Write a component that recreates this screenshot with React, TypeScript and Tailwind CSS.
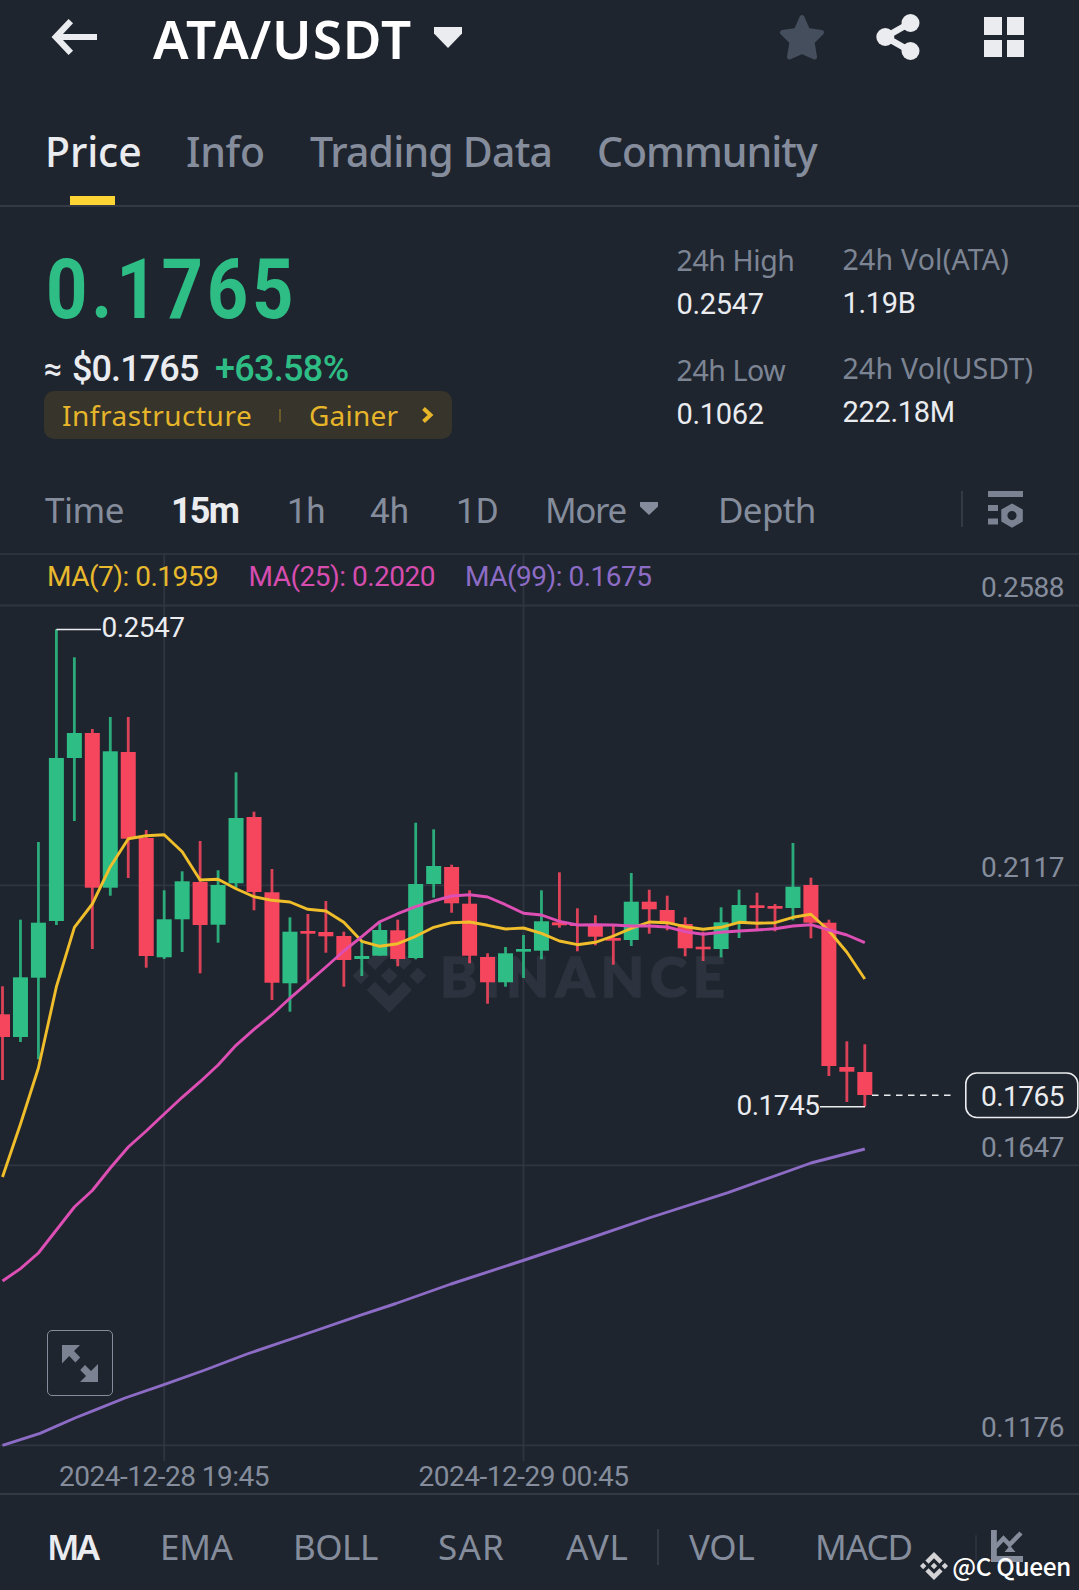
import React from "react";

const NOTO = "font-['Noto_Sans',sans-serif]";
const ROBOTO = "font-['Roboto',sans-serif]";

type Candle = [up: 0 | 1, high: number, top: number, bottom: number, low: number];

const CANDLES: Candle[] = [
  [0, 986.3, 1014.3, 1037, 1080],
  [1, 919.7, 977.3, 1037, 1042],
  [1, 842, 922.7, 977.7, 1059.3],
  [1, 629.3, 758, 921, 925],
  [1, 657.3, 733, 758, 821],
  [0, 729, 733, 887.7, 949],
  [1, 717, 751.3, 887.7, 895.7],
  [0, 717, 752, 838.7, 878],
  [0, 830, 838, 956, 967.7],
  [1, 890.3, 919.3, 957.3, 959],
  [1, 871.3, 881.3, 919.3, 952],
  [0, 841, 882, 925, 973.3],
  [1, 870.3, 885, 924.7, 942.7],
  [1, 772.3, 818, 883.3, 888.7],
  [0, 811.7, 817, 892, 910.3],
  [0, 869, 892.3, 982.7, 1000],
  [1, 917.3, 931.7, 983.3, 1011.7],
  [0, 914, 931, 933.7, 981.7],
  [0, 901, 932, 936.3, 952.7],
  [0, 931.7, 936, 960, 986.7],
  [1, 940, 956, 959, 976],
  [1, 922.7, 930, 955.7, 955.7],
  [0, 919.7, 930.3, 959, 966.3],
  [1, 822.7, 884, 958, 959.3],
  [1, 829.3, 866, 884, 897.7],
  [0, 864.7, 867, 903.3, 912.7],
  [0, 890.3, 903.7, 955.7, 963.3],
  [0, 953.3, 957, 982.3, 1003.7],
  [1, 947, 953.3, 982.3, 986.7],
  [1, 935, 949, 951.7, 978],
  [1, 890.3, 921.3, 950.7, 959.3],
  [0, 872.3, 922.3, 925.3, 927.7],
  [0, 908.3, 924, 926, 951.3],
  [0, 915.3, 924.3, 936.7, 945.3],
  [0, 924.3, 938, 940.7, 964.7],
  [1, 873, 901.7, 940, 946],
  [0, 889.7, 901.7, 909.3, 933.7],
  [0, 895.7, 910, 924, 930.3],
  [0, 917.3, 924, 948.3, 956.3],
  [0, 931.7, 946.7, 949.3, 961],
  [1, 907.3, 922.3, 949, 957.3],
  [1, 889.7, 905, 923, 938],
  [0, 892.7, 905.3, 908, 929],
  [0, 904, 906, 908.7, 931.3],
  [1, 843, 886.7, 908, 920.3],
  [0, 877.7, 885, 922.7, 938.3],
  [0, 919.7, 922.7, 1066, 1076],
  [0, 1041.3, 1067, 1071.7, 1102],
  [0, 1044.3, 1072, 1095, 1106.7],
];

const MA7 = [
  1177, 1124, 1068, 986.7, 927.3, 904, 866.7, 838.7, 835.7, 834.7, 851.7, 880, 879.3, 888.7, 896.7, 900.3, 902, 909.3,
  911, 922.3, 941.3, 946.3, 943.7, 936.3, 927.3, 922.7, 922, 925.3, 929, 928, 933.3, 941, 944.7, 942.3, 936, 928.3, 922,
  922.7, 926.7, 929.3, 927.3, 922.3, 923.3, 922.7, 917.3, 914.3, 930.7, 952.3, 979,
];

const MA25 = [
  1281, 1268.6, 1253, 1230, 1207, 1190.5, 1168, 1147, 1131, 1114, 1097.3, 1081.7, 1065, 1045.3, 1029.3, 1014.7, 998.3,
  982.7, 967, 951, 936.7, 921.7, 913.7, 906.7, 901, 896, 894.7, 897, 904.7, 913.3, 915, 921.3, 925, 924.7, 925, 926, 926,
  927, 931.7, 934.3, 932.3, 931, 930, 928.7, 926, 924.7, 930, 935, 942.7,
];

const MA99 =
  "2.5,1445.3 40,1433.3 75,1418 96,1409.7 125,1398 164,1384.7 205,1370 247,1354 303,1335 360,1315.3 396,1303.5 451,1284 523,1260.5 586,1239.5 649,1218 728,1192.6 811,1163 864.8,1149";

const cx = (i: number) => 2.5 + 17.965 * i;
const toPoints = (ys: number[]) => ys.map((y, i) => `${cx(i).toFixed(1)},${y}`).join(" ");

function BinanceMark({ className }: { className: string }) {
  return (
    <svg viewBox="0 0 126.6 126.6" className={className} fill="currentColor">
      <path d="M38.7 53.2 63.3 28.6l24.6 24.6 14.3-14.3L63.3 0 24.4 38.9zM0 63.3 14.3 49l14.3 14.3-14.3 14.3zM38.7 73.4 63.3 98l24.6-24.6 14.3 14.3-38.9 38.9-38.9-38.9zM98 63.3 112.3 49l14.3 14.3-14.3 14.3zM77.8 63.3 63.3 48.8 48.8 63.3l14.5 14.5z" />
    </svg>
  );
}

function Header() {
  return (
    <header className="flex h-[75px] items-center">
      <svg viewBox="0 0 46 36" className="mb-[2px] ml-[51px] h-9 w-[46px]" fill="none" stroke="#eaecef" strokeWidth="6.2">
        <path d="M19.8 2.2 4.8 18l15 15.8M4.5 18H46" />
      </svg>
      <h1 className={`ml-[56px] w-[281px] whitespace-nowrap pt-[1px] text-[53px] font-semibold leading-[75px] tracking-[1px] text-white ${NOTO}`}>
        ATA/USDT
      </h1>
      <svg viewBox="0 0 28 21" className="h-[21px] w-7" fill="#eaecef">
        <path d="M0 0h28v6.5L14 21 0 6.5z" />
      </svg>
      <svg viewBox="0 0 46 47" className="ml-[317px] h-[47px] w-[46px]" fill="#454e5c" stroke="#454e5c" strokeWidth="5" strokeLinejoin="round">
        <path d="M23 3.5 28.6 16.500 42.500 18.500 33 28 35.500 43 23 37.500 10.500 43 13 28 3.500 18.500 17.400 16.500z" />
      </svg>
      <svg viewBox="0 0 44 46" className="mb-[1px] ml-[51px] h-[46px] w-11" fill="#eaecef">
        <path d="M34 9 9.500 23 34 37" fill="none" stroke="#eaecef" strokeWidth="6.500" />
        <circle cx="34.500" cy="9" r="9" />
        <circle cx="9.300" cy="23" r="9" />
        <circle cx="34.500" cy="37" r="9" />
      </svg>
      <div className="mb-[1px] ml-[64px] grid grid-cols-2 gap-[5px]">
        <i className="h-[17.5px] w-[17.5px] bg-[#eaecef]" />
        <i className="h-[17.5px] w-[17.5px] bg-[#eaecef]" />
        <i className="h-[17.5px] w-[17.5px] bg-[#eaecef]" />
        <i className="h-[17.5px] w-[17.5px] bg-[#eaecef]" />
      </div>
    </header>
  );
}

function Tabs() {
  return (
    <nav className={`flex h-[132px] whitespace-nowrap border-b-2 border-[#333a45] pl-[45px] pt-[46px] text-[41px] font-medium leading-[60px] text-[#858d9c] ${NOTO}`}>
      <div className="flex w-[141px] flex-col">
        <span className="tracking-[-0.1px] text-[#eaecef]">Price</span>
        <span className="ml-[25px] mt-[15px] h-[9px] w-[45px] bg-[#fcd535]" />
      </div>
      <span className="w-[124px] tracking-[-0.3px]">Info</span>
      <span className="w-[287px] tracking-[-0.8px]">Trading Data</span>
      <span className="tracking-[-1px]">Community</span>
    </nav>
  );
}

function Stat({ label, value, tight = false }: { label: string; value: string; tight?: boolean }) {
  return (
    <div>
      <div className={`h-[44px] text-[28.5px] leading-[40px] text-[#7d8594] ${tight ? "tracking-[-0.4px]" : "tracking-[0.2px]"} ${NOTO}`}>
        {label}
      </div>
      <div className={`h-[40px] text-[29px] leading-[40px] tracking-[-0.3px] text-[#eaecef] ${ROBOTO}`}>{value}</div>
    </div>
  );
}

function PriceSummary() {
  return (
    <section className="flex h-[263px] whitespace-nowrap">
      <div className="w-[676.5px] pl-[44px] pt-[43px]">
        <div className={`ml-[2px] h-[80px] w-[260px] origin-left scale-x-[0.86] text-[84px] font-bold leading-[80px] tracking-[4.5px] text-[#2ebd85] ${ROBOTO}`}>
          0.1765
        </div>
        <div className={`mt-[19px] flex h-[40px] text-[36px] font-medium leading-[40px] ${ROBOTO}`}>
          <span className="w-[28px] text-[32px] text-[#eaecef]">≈</span>
          <span className="w-[143px] tracking-[-0.9px] text-[#eaecef]">$0.1765</span>
          <span className="tracking-[-0.7px] text-[#2ebd85]">+63.58%</span>
        </div>
        <div className={`mt-[2px] flex h-[48px] w-[408px] items-center rounded-[10px] bg-[#36342b] pl-[18px] text-[28px] text-[#e6b52a] ${NOTO}`}>
          <span className="w-[217px] tracking-[0.5px]">Infrastructure</span>
          <span className="h-[13px] w-[2px] bg-[#6a5a29]" />
          <span className="ml-[28px] w-[113px] tracking-[0.2px]">Gainer</span>
          <svg viewBox="0 0 12 16" className="h-4 w-3" fill="none" stroke="#e6b52a" strokeWidth="4">
            <path d="M1.5 1.5 8.5 8l-7 6.5" />
          </svg>
        </div>
      </div>
      <div className="flex w-[166px] flex-col gap-[26px] pt-[33px]">
        <Stat label="24h High" value="0.2547" tight />
        <Stat label="24h Low" value="0.1062" tight />
      </div>
      <div className="flex flex-col gap-[25px] pt-[32px]">
        <Stat label="24h Vol(ATA)" value="1.19B" />
        <Stat label="24h Vol(USDT)" value="222.18M" />
      </div>
    </section>
  );
}

function Timeframes() {
  return (
    <nav className={`flex h-[85px] items-center whitespace-nowrap border-b-2 border-[#2c333e] pb-1 pl-[45px] text-[35px] text-[#858d9c] ${NOTO}`}>
      <span className="w-[126px] pt-[2px] tracking-[-0.5px]">Time</span>
      <span className={`w-[116px] pt-[3px] text-[36px] font-bold tracking-[-1.8px] text-[#eaecef] ${ROBOTO}`}>15m</span>
      <span className={`w-[83px] pt-[5px] tracking-[-0.5px] ${ROBOTO}`}>1h</span>
      <span className={`w-[86px] pt-[5px] ${ROBOTO}`}>4h</span>
      <span className={`w-[89px] pt-[5px] ${ROBOTO}`}>1D</span>
      <span className="w-[95px] pt-[2px] tracking-[-1.4px]">More</span>
      <svg viewBox="0 0 18 13" className="mb-[3px] h-[13px] w-[18px]" fill="#858d9c">
        <path d="M0 0h18v4.5L9 13 0 4.5z" />
      </svg>
      <span className="ml-[60px] w-[243px] pt-[2px] tracking-[-0.7px]">Depth</span>
      <i className="mb-[2px] h-[36px] w-[2px] bg-[#333a45]" />
      <svg viewBox="0 0 35 37" className="ml-[25px] h-[37px] w-[35px]" fill="#7b8393">
        <path d="M0 0h35v6H0zM0 14h10v6H0zM0 27.500h10v6H0z" />
        <path fillRule="evenodd" d="M24 12.500 34.800 18.500V30.500L24 36.700 13.300 30.500V18.500zM24 20a4.600 4.600 0 1 0 0 9.200 4.600 4.600 0 1 0 0-9.200z" />
      </svg>
    </nav>
  );
}

function Chart() {
  return (
    <section className="relative h-[940px] border-b-2 border-[#333a45]">
      <svg viewBox="0 555 1079 938" className="block h-[938px] w-full">
        <g stroke="#2f3641" strokeWidth="1.8">
          {[605.5, 885.4, 1165.3, 1445.3].map((y) => (
            <path key={y} d={`M0 ${y}H1079`} />
          ))}
          <path d="M164.200 555V1461M523.500 555V1461" />
        </g>
        <g fill="#2d333e">
          <path
            transform="translate(352.500 939) scale(0.582)"
            d="M38.7 53.2 63.3 28.6l24.6 24.6 14.3-14.3L63.3 0 24.4 38.9zM0 63.3 14.3 49l14.3 14.3-14.3 14.3zM38.7 73.4 63.3 98l24.6-24.6 14.3 14.3-38.9 38.9-38.9-38.9zM98 63.3 112.3 49l14.3 14.3-14.3 14.3zM77.8 63.3 63.3 48.8 48.8 63.3l14.5 14.5z"
          />
          <text x="440" y="996.500" fontSize="56" fontWeight="900" textLength="285" stroke="#2d333e" strokeWidth="1.5" className="font-['Lato',sans-serif]">
            BINANCE
          </text>
        </g>
        {CANDLES.map(([up, high, top, bottom, low], i) => (
          <g key={i} fill={up ? "#2ebd85" : "#f6465d"}>
            <rect x={cx(i) - 1.4} y={high} width="2.8" height={low - high} opacity="0.88" />
            <rect x={cx(i) - 7.5} y={top} width="15" height={bottom - top} />
          </g>
        ))}
        <g fill="none" strokeWidth="2.9" strokeLinejoin="round">
          <polyline points={MA99} stroke="#8d6cc6" />
          <polyline points={toPoints(MA7)} stroke="#f0bd2b" />
          <polyline points={toPoints(MA25)} stroke="#dd4fb4" />
        </g>
        <g stroke="#eaecef" strokeWidth="1.6">
          <path d="M56.400 629.500H101M820 1106.800H865" />
          <path d="M872 1095.200H951" strokeDasharray="6.500 5.500" />
        </g>
        <g fontSize="28" letterSpacing="-0.5" className="font-['Roboto',sans-serif]">
          <text x="47" y="586" fill="#e8b92d">MA(7): 0.1959</text>
          <text x="248.500" y="586" fill="#d64daf">MA(25): 0.2020</text>
          <text x="465" y="586" fill="#8d6cc6">MA(99): 0.1675</text>
          <g fill="#858d9c">
            <text x="981" y="597">0.2588</text>
            <text x="981" y="877">0.2117</text>
            <text x="981" y="1157">0.1647</text>
            <text x="981" y="1437">0.1176</text>
            <text x="59" y="1486">2024-12-28 19:45</text>
            <text x="418.500" y="1486">2024-12-29 00:45</text>
          </g>
          <g fill="#eaecef">
            <text x="101.500" y="637">0.2547</text>
            <text x="736.500" y="1115">0.1745</text>
          </g>
          <rect x="965.800" y="1073" width="112" height="44.500" rx="11" fill="#1f252f" stroke="#eaecef" strokeWidth="1.600" />
          <text x="981" y="1106" fill="#eaecef">0.1765</text>
        </g>
      </svg>
      <button className="absolute left-[47px] top-[775px] flex h-[66px] w-[66px] items-center justify-center rounded-[5px] border-[1.5px] border-[#858d9c]">
        <svg viewBox="0 0 36 37" className="h-[37px] w-9" fill="#7b8393">
          <path d="M0 0h18l-6 6 6.200 6.500-4.800 5L7.200 11 0 18.500zM36 37H18l6-6-5.800-6 4.800-5 6 6 7-7z" />
        </svg>
      </button>
    </section>
  );
}

function Indicators() {
  return (
    <nav className={`flex h-[95px] items-center whitespace-nowrap pl-[47px] pt-[10px] text-[35px] text-[#858d9c] ${NOTO}`}>
      <span className="w-[113px] font-semibold tracking-[-3px] text-[#eaecef]">MA</span>
      <span className="w-[133px] tracking-[-0.3px]">EMA</span>
      <span className="w-[145px] tracking-[-0.5px]">BOLL</span>
      <span className="w-[128px] tracking-[1.2px]">SAR</span>
      <span className="w-[91px] tracking-[0.8px]">AVL</span>
      <i className="mb-[2px] h-[36px] w-[2px] bg-[#333a45]" />
      <span className="ml-[30px] w-[126px] tracking-[-0.3px]">VOL</span>
      <span className="w-[160px] tracking-[-1px]">MACD</span>
      <i className="h-[26px] w-[2px] bg-[#2a303b]" />
      <svg viewBox="0 0 32 32" className="mb-[4px] ml-[14px] h-8 w-8" fill="#858d9c">
        <path d="M0 0h5.800v26H32v6H0z" />
        <path d="M4 17.500 12.500 8.500l6 6.300L30 3" fill="none" stroke="#858d9c" strokeWidth="4.500" />
        <path d="M19 15.500l5.500 6.500h-11z" />
      </svg>
    </nav>
  );
}

export default function App() {
  return (
    <main className="relative h-[1590px] w-[1079px] overflow-hidden bg-[#1f252f]">
      <Header />
      <Tabs />
      <PriceSummary />
      <Timeframes />
      <Chart />
      <Indicators />
      <div className="absolute bottom-[6px] right-[8px] flex h-[36px] items-center gap-[4px] whitespace-nowrap font-['Noto_Sans_CJK_SC',sans-serif] text-[24.5px] font-medium tracking-[-0.4px] text-white">
        <BinanceMark className="h-7 w-7 text-[#d4d4d6]" />
        @C Queen
      </div>
    </main>
  );
}
